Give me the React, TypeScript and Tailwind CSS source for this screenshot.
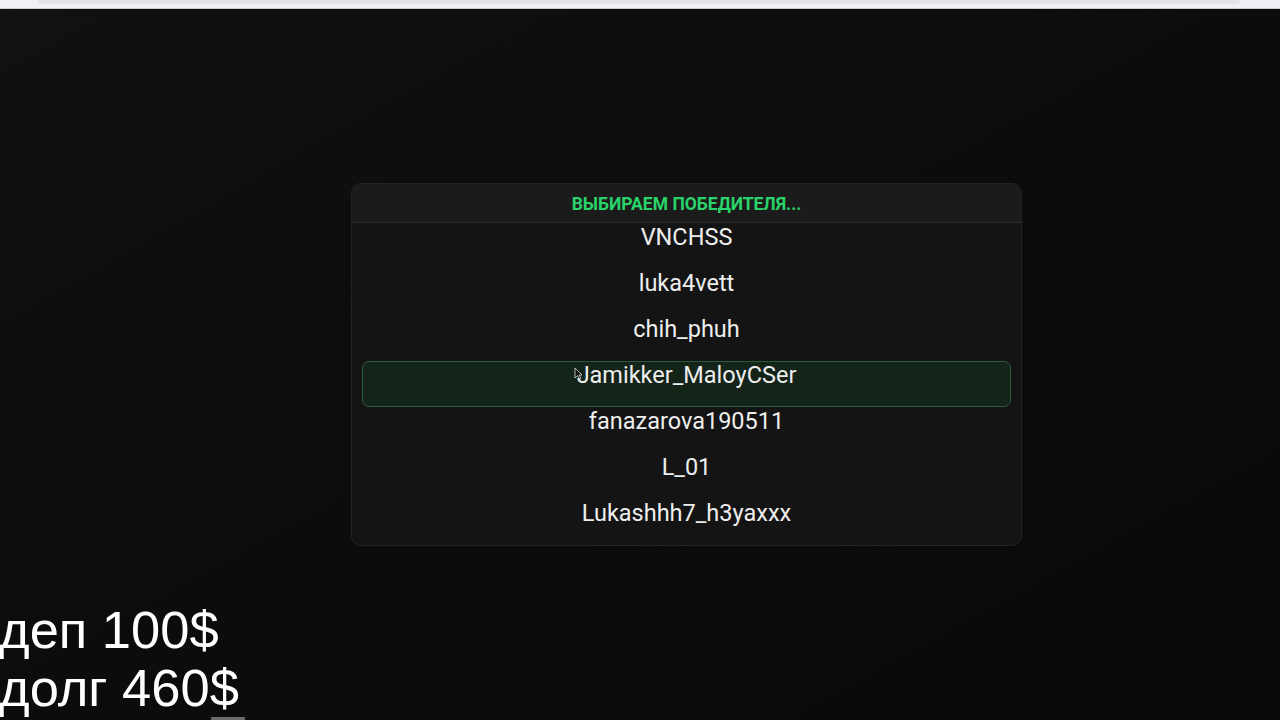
import React from "react"

const names = [
  "VNCHSS",
  "luka4vett",
  "chih_phuh",
  "Jamikker_MaloyCSer",
  "fanazarova190511",
  "L_01",
  "Lukashhh7_h3yaxxx",
]

export default function App() {
  return (
    <div className="relative flex h-[720px] w-[1280px] flex-col overflow-hidden bg-[#0b0c0c] font-['Roboto',sans-serif]">
      {/* browser strip */}
      <div className="h-[9px] shrink-0 border-b border-[#c9c9cf] bg-[#f1f1f5] px-[37px]">
        <div className="h-[4px] w-[1203px] rounded-b-[4px] bg-[#e3e3e9]" />
      </div>

      <div className="flex flex-1 flex-col bg-gradient-to-br from-[#0f1211] via-[#0b0c0c] to-[#080909]">
        <div className="ml-[351px] mt-[174px] w-[671px] overflow-hidden rounded-[10px] border border-[#232323] bg-[#141414]">
          <div className="flex h-[39px] items-center justify-center border-b border-[#2c2c2c] bg-[#1b1b1b] pt-[2px] text-[17.5px] font-bold uppercase text-[#29d36a]">
            Выбираем победителя...
          </div>
          <div className="flex flex-col px-[10px]">
            {names.map((n, i) => (
              <div
                key={n}
                className={
                  i === 3
                    ? "relative h-[46px] rounded-[7px] border border-[#2b5a3a] bg-[#142419] text-center text-[23.5px] leading-[26px] text-[#eeeeee]"
                    : "h-[46px] border border-transparent text-center text-[23.5px] leading-[26px] text-[#eeeeee]"
                }
              >
                {n}
                {i === 3 && (
                  <svg
                    className="absolute left-[211px] top-[5px]"
                    width="9"
                    height="13"
                    viewBox="0 0 9 13"
                  >
                    <path d="M1 1 L1 11 L3.5 8.5 L5.5 12 L7 11.3 L5 8 L8 8 Z" fill="#111" stroke="#ddd" strokeWidth="0.8" />
                  </svg>
                )}
              </div>
            ))}
          </div>
        </div>

        <div className="mt-[55px] flex flex-col font-['Liberation_Sans',Arial,sans-serif] text-[52.5px] leading-[58px] text-white">
          <div className="-ml-px">деп 100$</div>
          <div className="-ml-px">долг 460$</div>
        </div>
        <div className="ml-[211px] mt-auto h-[4px] w-[34px] bg-[#6b6b6b]" />
      </div>
    </div>
  )
}
